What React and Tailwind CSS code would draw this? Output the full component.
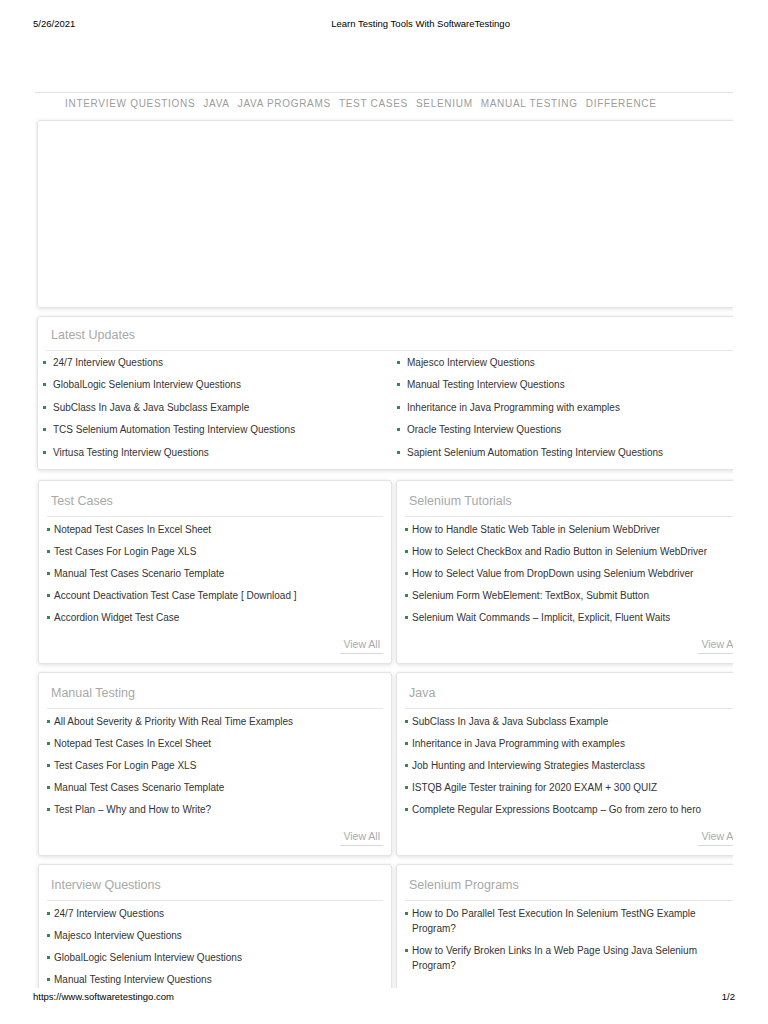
const navItems = [
  "INTERVIEW QUESTIONS",
  "JAVA",
  "JAVA PROGRAMS",
  "TEST CASES",
  "SELENIUM",
  "MANUAL TESTING",
  "DIFFERENCE",
];

const latest = [
  ["24/7 Interview Questions", "Majesco Interview Questions"],
  ["GlobalLogic Selenium Interview Questions", "Manual Testing Interview Questions"],
  ["SubClass In Java & Java Subclass Example", "Inheritance in Java Programming with examples"],
  ["TCS Selenium Automation Testing Interview Questions", "Oracle Testing Interview Questions"],
  ["Virtusa Testing Interview Questions", "Sapient Selenium Automation Testing Interview Questions"],
];

const cards = [
  {
    title: "Test Cases",
    items: [
      "Notepad Test Cases In Excel Sheet",
      "Test Cases For Login Page XLS",
      "Manual Test Cases Scenario Template",
      "Account Deactivation Test Case Template [ Download ]",
      "Accordion Widget Test Case",
    ],
    viewAll: true,
  },
  {
    title: "Selenium Tutorials",
    items: [
      "How to Handle Static Web Table in Selenium WebDriver",
      "How to Select CheckBox and Radio Button in Selenium WebDriver",
      "How to Select Value from DropDown using Selenium Webdriver",
      "Selenium Form WebElement: TextBox, Submit Button",
      "Selenium Wait Commands – Implicit, Explicit, Fluent Waits",
    ],
    viewAll: true,
  },
  {
    title: "Manual Testing",
    items: [
      "All About Severity & Priority With Real Time Examples",
      "Notepad Test Cases In Excel Sheet",
      "Test Cases For Login Page XLS",
      "Manual Test Cases Scenario Template",
      "Test Plan – Why and How to Write?",
    ],
    viewAll: true,
  },
  {
    title: "Java",
    items: [
      "SubClass In Java & Java Subclass Example",
      "Inheritance in Java Programming with examples",
      "Job Hunting and Interviewing Strategies Masterclass",
      "ISTQB Agile Tester training for 2020 EXAM + 300 QUIZ",
      "Complete Regular Expressions Bootcamp – Go from zero to hero",
    ],
    viewAll: true,
  },
  {
    // the page is cut off here by the print
    title: "Interview Questions",
    items: [
      "24/7 Interview Questions",
      "Majesco Interview Questions",
      "GlobalLogic Selenium Interview Questions",
      "Manual Testing Interview Questions",
    ],
  },
  {
    title: "Selenium Programs",
    items: [
      "How to Do Parallel Test Execution In Selenium TestNG Example Program?",
      "How to Verify Broken Links In a Web Page Using Java Selenium Program?",
    ],
  },
];

const Bullet = () => (
  <span className="mt-[6px] h-[3px] w-[3px] shrink-0 bg-[#2e8b57]" />
);

const Card = ({ title, items, viewAll }) => (
  <div className="rounded-[3px] border border-[#e4e4e4] bg-white px-2 shadow-[0_1px_4px_rgba(0,0,0,0.13)]">
    <div className="border-b border-[#e8e8e8] pb-[7px] pl-1 pt-[12px] text-[12.5px] leading-[16px] text-[#a8a8a8]">
      {title}
    </div>
    <ul className="pr-[18px] pt-[2px]">
      {items.map((item, i) => (
        <li
          key={i}
          className="flex gap-[4px] py-[3.5px] text-[10px] leading-[15px] text-[#333]"
        >
          <Bullet />
          <span>{item}</span>
        </li>
      ))}
    </ul>
    {viewAll && (
      <div className="flex justify-end pb-[9px] pt-[8px]">
        <span className="border-b border-[#d8d8d8] px-[3px] pb-[2px] text-[10.5px] leading-[14px] text-[#aaa]">
          View All
        </span>
      </div>
    )}
  </div>
);

export default function App() {
  return (
    <div
      className="relative h-[1024px] w-[768px] overflow-hidden bg-white text-black"
      style={{ fontFamily: '"Liberation Sans", Arial, sans-serif' }}
    >
      {/* print header */}
      <div className="flex h-[48px] items-center px-[33px] text-[9.5px]">
        <span>5/26/2021</span>
        <span className="ml-[256px]">Learn Testing Tools With SoftwareTestingo</span>
      </div>

      <div className="ml-[35px] h-[940px] w-[698px] overflow-hidden pt-[44px]">
        <div className="w-[716px]">
          <div className="border-t border-[#e2e2e2]" />
          <nav className="flex gap-[8px] pb-[9px] pl-[30px] pt-[4px] text-[10px] leading-[14px] tracking-[0.7px] text-[#9c9c9c]">
            {navItems.map((n) => (
              <span key={n}>{n}</span>
            ))}
          </nav>

          <div className="ml-[2px] h-[188px] w-[713px] rounded-[3px] border border-[#e4e4e4] shadow-[0_1px_4px_rgba(0,0,0,0.12)]" />

          <div className="ml-[2px] mt-[8px] w-[713px] rounded-[3px] border border-[#e4e4e4] pb-[5px] shadow-[0_1px_4px_rgba(0,0,0,0.13)]">
            <div className="mx-2 border-b border-[#e8e8e8] pb-[7px] pl-[5px] pt-[10px] text-[12.5px] leading-[16px] text-[#a8a8a8]">
              Latest Updates
            </div>
            <div className="grid grid-cols-[354px_354px] pl-[5px]">
              {latest.map((row, i) =>
                row.map((item, j) => (
                  <div
                    key={`${i}-${j}`}
                    className="flex h-[22.5px] items-center gap-[7px] text-[10px] leading-[15px] text-[#333]"
                  >
                    <span className="h-[3px] w-[3px] shrink-0 bg-[#2e8b57]" />
                    <span>{item}</span>
                  </div>
                ))
              )}
            </div>
          </div>

          <div className="ml-[3px] mt-[10px] grid w-[712px] grid-cols-2 gap-x-[4px] gap-y-[8px]">
            {cards.map((c) => (
              <Card key={c.title} {...c} />
            ))}
          </div>
        </div>
      </div>

      {/* print footer */}
      <div className="flex h-[18px] items-center justify-between pl-[33px] pr-[33px] text-[9.5px]">
        <span>https://www.softwaretestingo.com</span>
        <span>1/2</span>
      </div>
    </div>
  );
}
